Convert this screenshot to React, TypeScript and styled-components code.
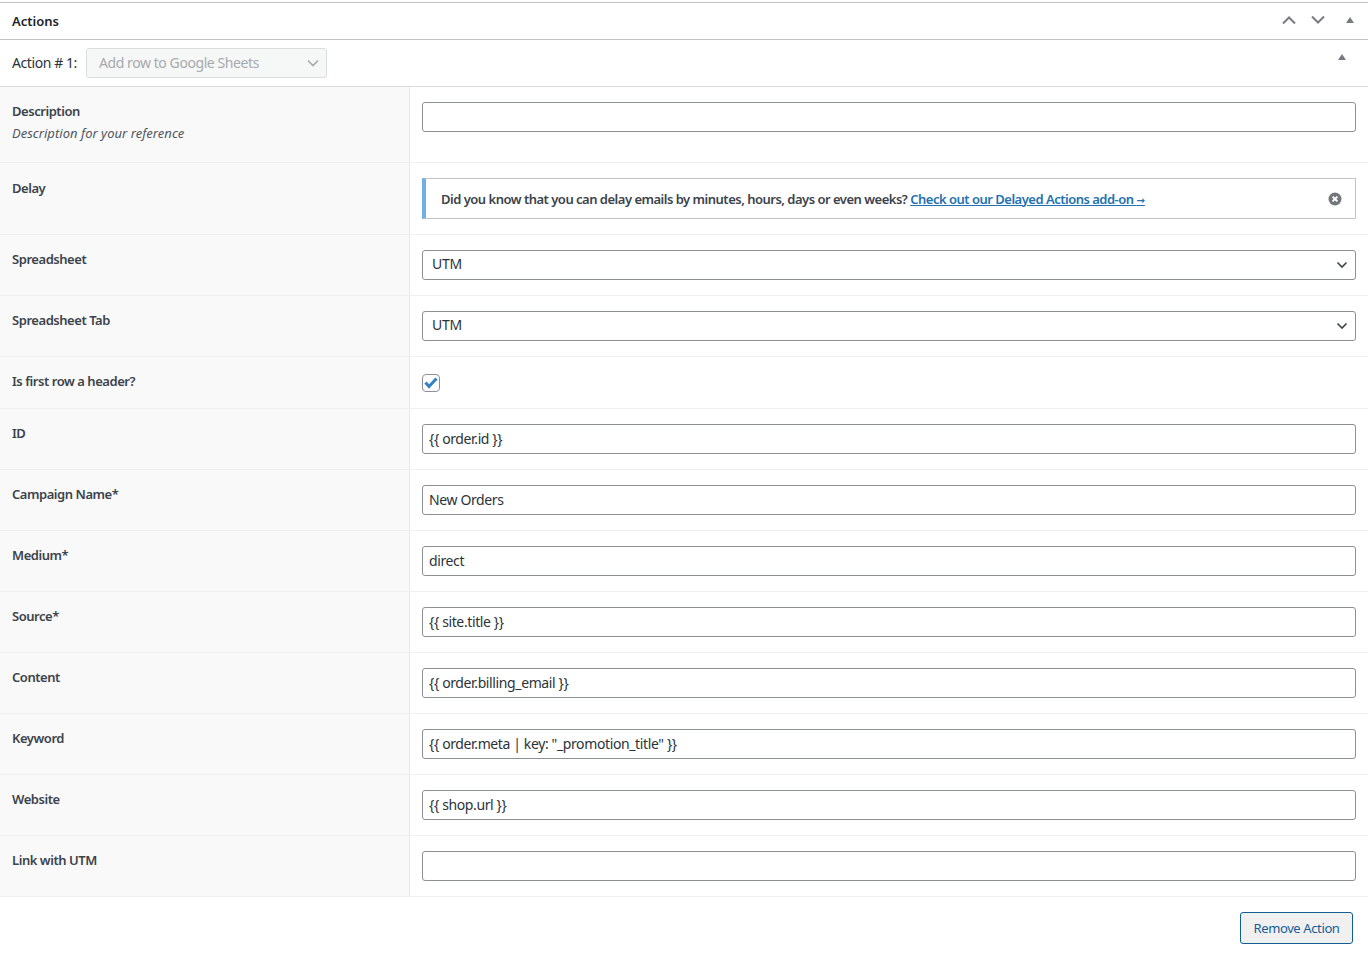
import React from 'react';
import styled, { createGlobalStyle } from 'styled-components';

const GlobalStyle = createGlobalStyle`
  html, body {
    margin: 0;
    padding: 0;
    background: #fff;
    font-family: "Noto Sans", sans-serif;
    font-size: 13px;
    color: #3c434a;
  }
`;

const Panel = styled.div`
  margin-top: 2px;
  border-top: 1px solid #c3c4c7;
  background: #fff;
`;

const PanelHeader = styled.div`
  display: flex;
  align-items: center;
  justify-content: space-between;
  height: 36px;
  padding: 0 12px;
  border-bottom: 1px solid #c3c4c7;
`;

const PanelTitle = styled.h2`
  margin: 0;
  font-size: 13px;
  line-height: 36px;
  font-weight: 600;
  color: #1d2327;
`;

const HeaderTools = styled.div`
  display: flex;
  align-items: center;
  margin-top: -2px;
  margin-right: 1px;
`;

const ToolIcon = styled.svg<{ $gap?: number }>`
  display: block;
  margin-left: ${props => props.$gap ?? 0}px;
  fill: none;
  stroke: #787c82;
  stroke-width: 2;
`;

const Caret = styled.svg<{ $gap?: number }>`
  display: block;
  margin-left: ${props => props.$gap ?? 0}px;
  fill: #787c82;
`;

const ActionBar = styled.div`
  display: flex;
  align-items: center;
  justify-content: space-between;
  height: 46px;
  padding: 0 21px 0 12px;
  border-bottom: 1px solid #dcdcde;
`;

const ActionLeft = styled.div`
  display: flex;
  align-items: center;
  gap: 9px;
  color: #2c3338;
  font-size: 14px;
  letter-spacing: -0.42px;
`;

const ActionLabel = styled.span`
  margin-top: -2px;
`;

const ActionSelect = styled.div`
  display: flex;
  align-items: center;
  justify-content: space-between;
  box-sizing: border-box;
  width: 241px;
  height: 30px;
  padding: 0 7px 2px 12px;
  background: #f6f7f7;
  border: 1px solid #dcdcde;
  border-radius: 3px;
  color: #a7aaad;
  font-size: 14px;
`;

const CaretUp = styled(Caret)`
  margin-top: -12px;
`;

const Row = styled.div<{ $height: number }>`
  display: grid;
  grid-template-columns: 410px 1fr;
  height: ${props => props.$height}px;
  border-bottom: 1px solid #f0f0f1;
`;

const LabelCell = styled.div<{ $top?: number }>`
  box-sizing: border-box;
  padding: ${props => props.$top ?? 15}px 12px 0;
  background: #f9f9f9;
  border-right: 1px solid #e9e9ea;
`;

const Label = styled.div`
  font-size: 13px;
  line-height: 18px;
  font-weight: 600;
  letter-spacing: -0.45px;
  color: #3c434a;
`;

const Hint = styled.div`
  margin-top: 4px;
  font-size: 13px;
  line-height: 18px;
  font-style: italic;
  letter-spacing: 0.03px;
  color: #50575e;
`;

const FieldCell = styled.div<{ $top?: number }>`
  box-sizing: border-box;
  padding: ${props => props.$top ?? 15}px 12px 0;
`;

const TextInput = styled.input`
  display: block;
  box-sizing: border-box;
  width: 100%;
  height: 30px;
  padding: 0 6px 2px;
  background: #fff;
  border: 1px solid #8c8f94;
  border-radius: 3px;
  outline: none;
  font-family: inherit;
  font-size: 14px;
  letter-spacing: -0.38px;
  color: #2c3338;
`;

const SelectBox = styled.div`
  display: flex;
  align-items: center;
  justify-content: space-between;
  box-sizing: border-box;
  width: 100%;
  height: 30px;
  padding: 0 7px 4px 9px;
  background: #fff;
  border: 1px solid #8c8f94;
  border-radius: 3px;
  font-size: 14px;
  letter-spacing: -0.2px;
  color: #2c3338;
`;

const Chevron = styled.svg<{ $color: string; $shift: number }>`
  display: block;
  margin-top: ${props => props.$shift}px;
  fill: none;
  stroke: ${props => props.$color};
  stroke-width: 1.6;
`;

const Notice = styled.div`
  display: flex;
  align-items: center;
  justify-content: space-between;
  box-sizing: border-box;
  height: 41px;
  padding: 0 13px 0 15px;
  background: #fff;
  border: 1px solid #c3c4c7;
  border-left: 4px solid #72aee6;
`;

const NoticeText = styled.div`
  font-size: 13px;
  font-weight: 600;
  letter-spacing: -0.5px;
  color: #3c434a;
`;

const NoticeLink = styled.a`
  color: #2271b1;
  text-decoration: underline;
`;

const LinkArrow = styled.span`
  font-family: "DejaVu Sans", sans-serif;
  font-size: 10px;
  font-weight: 700;
  letter-spacing: 0;
`;

const CheckBox = styled.span`
  display: flex;
  align-items: center;
  justify-content: center;
  box-sizing: border-box;
  width: 18px;
  height: 18px;
  border: 1px solid #8c8f94;
  border-radius: 4px;
  background: #fff;
`;

const Footer = styled.div`
  display: flex;
  justify-content: flex-end;
  padding: 15px 15px 15px 0;
`;

const RemoveButton = styled.button`
  box-sizing: border-box;
  width: 113px;
  height: 32px;
  padding: 0;
  background: #f0f0f1;
  border: 1px solid #135e96;
  border-radius: 3px;
  font-family: inherit;
  font-size: 13px;
  letter-spacing: -0.38px;
  color: #135e96;
`;

const fields = [
  { label: 'ID', value: '{{ order.id }}' },
  { label: 'Campaign Name*', value: 'New Orders' },
  { label: 'Medium*', value: 'direct' },
  { label: 'Source*', value: '{{ site.title }}' },
  { label: 'Content', value: '{{ order.billing_email }}' },
  { label: 'Keyword', value: '{{ order.meta | key: "_promotion_title" }}' },
  { label: 'Website', value: '{{ shop.url }}' },
  { label: 'Link with UTM', value: '' },
];

const App: React.FC = () => {
  return (
    <Panel>
      <GlobalStyle />
      <PanelHeader>
        <PanelTitle>Actions</PanelTitle>
        <HeaderTools>
          <ToolIcon width="16" height="10" viewBox="0 0 16 10">
            <path d="M2 8.5 L8 2.5 L14 8.5" />
          </ToolIcon>
          <ToolIcon width="16" height="10" viewBox="0 0 16 10" $gap={13}>
            <path d="M2 1.5 L8 7.5 L14 1.5" />
          </ToolIcon>
          <Caret width="10" height="8" viewBox="0 0 10 8" $gap={19}>
            <path d="M5 1 L9 7 L1 7 Z" />
          </Caret>
        </HeaderTools>
      </PanelHeader>

      <ActionBar>
        <ActionLeft>
          <ActionLabel>Action # 1:</ActionLabel>
          <ActionSelect>
            Add row to Google Sheets
            <Chevron $color="#a7aaad" $shift={2} width="12" height="8" viewBox="0 0 12 8">
              <path d="M1 1.5 L6 6.5 L11 1.5" />
            </Chevron>
          </ActionSelect>
        </ActionLeft>
        <CaretUp width="10" height="8" viewBox="0 0 10 8">
          <path d="M5 1 L9 7 L1 7 Z" />
        </CaretUp>
      </ActionBar>

      <Row $height={75}>
        <LabelCell>
          <Label>Description</Label>
          <Hint>Description for your reference</Hint>
        </LabelCell>
        <FieldCell>
          <TextInput readOnly value="" />
        </FieldCell>
      </Row>

      <Row $height={71}>
        <LabelCell $top={16}>
          <Label>Delay</Label>
        </LabelCell>
        <FieldCell $top={15}>
          <Notice>
            <NoticeText>
              Did you know that you can delay emails by minutes, hours, days or even weeks?{' '}
              <NoticeLink href="#">
                Check out our Delayed Actions add-on <LinkArrow>→</LinkArrow>
              </NoticeLink>
            </NoticeText>
            <svg width="14" height="14" viewBox="0 0 14 14">
              <circle cx="7" cy="7" r="6.5" fill="#72777c" />
              <path d="M4.6 4.6 L9.4 9.4 M9.4 4.6 L4.6 9.4" stroke="#fff" strokeWidth="2" />
            </svg>
          </Notice>
        </FieldCell>
      </Row>

      {['Spreadsheet', 'Spreadsheet Tab'].map(label => (
        <Row $height={60} key={label}>
          <LabelCell>
            <Label>{label}</Label>
          </LabelCell>
          <FieldCell>
            <SelectBox>
              UTM
              <Chevron $color="#3c434a" $shift={4} width="12" height="8" viewBox="0 0 12 8">
                <path d="M1.5 1.5 L6 6 L10.5 1.5" />
              </Chevron>
            </SelectBox>
          </FieldCell>
        </Row>
      ))}

      <Row $height={51}>
        <LabelCell>
          <Label>Is first row a header?</Label>
        </LabelCell>
        <FieldCell $top={17}>
          <CheckBox>
            <svg width="14" height="14" viewBox="0 0 14 14">
              <path d="M1.5 6.5 L5 10.5 L12.5 2.5" fill="none" stroke="#3582c4" strokeWidth="3" />
            </svg>
          </CheckBox>
        </FieldCell>
      </Row>

      {fields.map(field => (
        <Row $height={60} key={field.label}>
          <LabelCell>
            <Label>{field.label}</Label>
          </LabelCell>
          <FieldCell>
            <TextInput readOnly value={field.value} />
          </FieldCell>
        </Row>
      ))}

      <Footer>
        <RemoveButton type="button">Remove Action</RemoveButton>
      </Footer>
    </Panel>
  );
};

export default App;
